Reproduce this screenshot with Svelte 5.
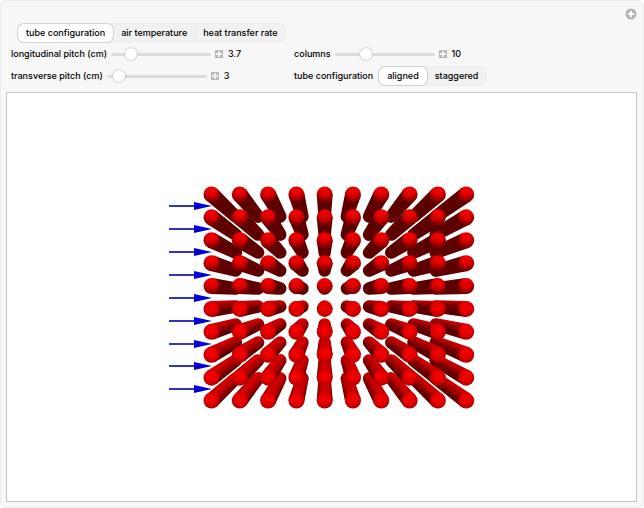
<script lang="ts">
	interface Point {
		x: number;
		y: number;
	}

	interface Tube {
		front: Point;
		back: Point;
		body: string;
		nx: number;
		ny: number;
		fill: string;
		lower: boolean;
		depth: number;
	}

	let view = $state('tube configuration');
	let layout = $state('aligned');
	let longitudinal = $state(3.7);
	let transverse = $state(3);
	let columns = $state(10);

	const views = ['tube configuration', 'air temperature', 'heat transfer rate'];
	const layouts = ['aligned', 'staggered'];

	const rows = 10;
	const eye: Point = { x: 324.5, y: 297.5 };
	const shrink = 0.785;
	const radius = 8;

	function makeTubes(cols: number, sl: number, st: number, staggered: boolean): Tube[] {
		const list: Tube[] = [];
		const stepX = 28.3 * (sl / 3.7);
		const stepY = 22.9 * (st / 3);
		for (let c = 0; c < cols; c++) {
			for (let r = 0; r < rows; r++) {
				const shift = staggered && c % 2 ? stepY / 2 : 0;
				const front = { x: 211.5 + c * stepX, y: eye.y + (r - 4.5) * stepY + shift };
				const dx = front.x - eye.x;
				const dy = front.y - eye.y;
				const back = { x: eye.x + dx * shrink, y: eye.y + dy * shrink };
				const len = Math.hypot(dx, dy) || 1;
				// unit normal across the tube, always pointing down
				let nx = -dy / len;
				let ny = dx / len;
				if (ny < 0 || (ny === 0 && nx < 0)) {
					nx = -nx;
					ny = -ny;
				}
				const rb = radius * shrink;
				const body = [
					`M${front.x + nx * radius} ${front.y + ny * radius}`,
					`L${back.x + nx * rb} ${back.y + ny * rb}`,
					`A${rb} ${rb} 0 1 ${dx < 0 ? 0 : 1} ${back.x - nx * rb} ${back.y - ny * rb}`,
					`L${front.x - nx * radius} ${front.y - ny * radius}Z`
				].join('');
				list.push({
					front,
					back,
					body,
					nx,
					ny,
					fill: `tube-${c}-${r}`,
					lower: dy > 0,
					depth: len
				});
			}
		}
		return list.sort((a, b) => b.depth - a.depth);
	}

	// diffuse light from above, so only tubes below the eye show a lit side
	function shade(t: Tube, k: number) {
		const dx = t.front.x - eye.x;
		const dy = t.front.y - eye.y;
		const side = Math.sqrt(1 - k * k);
		const x = t.nx * k - (dx / t.depth) * side;
		const y = t.ny * k - (dy / t.depth) * side;
		const light = Math.max(0, -y * 0.85 + x * 0.1);
		return `rgb(${Math.round(92 + 140 * Math.min(1, t.lower ? light : 0))}, 0, 0)`;
	}

	let tubes = $derived(makeTubes(columns, longitudinal, transverse, layout === 'staggered'));
	const arrows = [206, 229, 252, 275, 298, 321, 344, 366, 389];
</script>

<main class="panel">
	<header>
		<button class="more" aria-label="more options">
			<svg viewBox="0 0 12 12" width="12" height="12">
				<circle cx="6" cy="6" r="5.5" fill="#b5b5b5" />
				<path d="M6 3v6M3 6h6" stroke="#fff" stroke-width="2" />
			</svg>
		</button>
	</header>

	<div class="segments tabs">
		{#each views as name}
			<button class:active={view === name} onclick={() => (view = name)}>{name}</button>
		{/each}
	</div>

	<div class="controls">
		<div class="control">
			<label for="longitudinal">longitudinal pitch (cm)</label>
			<input id="longitudinal" type="range" min="3" max="7.5" step="0.1" bind:value={longitudinal} />
			{@render plus('longitudinal pitch')}
			<output for="longitudinal">{longitudinal}</output>
		</div>
		<div class="control">
			<label for="columns">columns</label>
			<input id="columns" type="range" min="5" max="22" bind:value={columns} />
			{@render plus('columns')}
			<output for="columns">{columns}</output>
		</div>
		<div class="control">
			<label for="transverse">transverse pitch (cm)</label>
			<input id="transverse" type="range" min="2.8" max="5.5" step="0.1" bind:value={transverse} />
			{@render plus('transverse pitch')}
			<output for="transverse">{transverse}</output>
		</div>
		<div class="control">
			<span>tube configuration</span>
			<div class="segments layouts">
				{#each layouts as name}
					<button class:active={layout === name} onclick={() => (layout = name)}>{name}</button>
				{/each}
			</div>
		</div>
	</div>

	<div class="plot">
		<svg viewBox="7 93 629 408" role="img" aria-label="tube bank with air flow">
			<defs>
				<radialGradient id="cap-upper" cx="0.5" cy="0.22" r="0.8">
					<stop offset="0" stop-color="#f60000" />
					<stop offset="0.4" stop-color="#e00000" />
					<stop offset="1" stop-color="#6c0000" />
				</radialGradient>
				<radialGradient id="cap-lower" cx="0.5" cy="0.4" r="0.65">
					<stop offset="0" stop-color="#fa0000" />
					<stop offset="0.55" stop-color="#e00000" />
					<stop offset="1" stop-color="#960000" />
				</radialGradient>
				{#each tubes as t (t.fill)}
					<linearGradient
						id={t.fill}
						gradientUnits="userSpaceOnUse"
						x1={t.front.x - t.nx * radius}
						y1={t.front.y - t.ny * radius}
						x2={t.front.x + t.nx * radius}
						y2={t.front.y + t.ny * radius}
					>
						{#each [-1, -0.6, -0.2, 0.2, 0.6, 1] as k}
							<stop offset={(k + 1) / 2} stop-color={shade(t, k)} />
						{/each}
					</linearGradient>
				{/each}
				<linearGradient id="head" x1="0" y1="0" x2="0" y2="1">
					<stop offset="0" stop-color="#0000ff" />
					<stop offset="1" stop-color="#0000b0" />
				</linearGradient>
			</defs>
			{#each tubes as t (t.fill)}
				<path d={t.body} fill="url(#{t.fill})" />
				<circle
					cx={t.front.x}
					cy={t.front.y}
					r={radius}
					fill={t.lower ? 'url(#cap-lower)' : 'url(#cap-upper)'}
				/>
			{/each}
			{#each arrows as y}
				<path d="M169 {y}H196" stroke="#0000b4" stroke-width="1.6" />
				<path d="M194 {y - 4}L212 {y}L194 {y + 4}Z" fill="url(#head)" />
			{/each}
		</svg>
	</div>
</main>

{#snippet plus(name: string)}
	<button class="plus" aria-label="show {name} controls">
		<svg viewBox="0 0 8 8" width="8" height="8">
			<rect width="8" height="8" fill="#b8b8b8" />
			<path d="M4 1v6M1 4h6" stroke="#fff" stroke-width="1.4" />
		</svg>
	</button>
{/snippet}

<style>
	:global(body) {
		margin: 0;
		background: #fff;
	}

	.panel {
		box-sizing: border-box;
		padding: 7px 6px 5px 5px;
		border: 1px solid #ececec;
		border-radius: 6px;
		background: #f7f7f7;
		color: #000;
		font: 500 9px/12px Inter, 'Liberation Sans', sans-serif;
	}

	button {
		padding: 0;
		border: 0;
		background: none;
		color: inherit;
		font: inherit;
		cursor: pointer;
	}

	svg {
		display: block;
	}

	header {
		display: flex;
		justify-content: flex-end;
		height: 16px;
	}

	.more {
		height: 12px;
	}

	.segments {
		display: flex;
		width: fit-content;
		border-radius: 7px;
		background: #f1f1f1;
		box-shadow: 0 0 0 1px #ededed;
	}

	.segments button {
		height: 18px;
		padding: 0 8px;
		border-radius: 6px;
	}

	.segments .active {
		background: #fff;
		box-shadow: 0 0 0 1px #d2d2d2;
	}

	.tabs {
		margin-left: 12px;
	}

	.tabs button:not(.active) + button:not(.active)::before {
		content: '';
		margin-right: 7px;
		margin-left: -8px;
		border-left: 1px solid #e2e2e2;
	}

	.layouts {
		margin-left: 2px;
	}

	.controls {
		display: grid;
		grid-template-columns: 283px 1fr;
		grid-auto-rows: 22px;
		margin-left: 5px;
		padding-top: 1px;
		padding-bottom: 5px;
	}

	.control {
		display: flex;
		align-items: center;
		gap: 4px;
	}

	output {
		margin-left: 1px;
	}

	input {
		appearance: none;
		width: 100px;
		height: 14px;
		margin: 0;
		background: none;
	}

	input::-webkit-slider-runnable-track {
		height: 3px;
		border-radius: 2px;
		background: #dcdcdc;
	}

	input::-webkit-slider-thumb {
		appearance: none;
		width: 12px;
		height: 12px;
		margin-top: -5px;
		border-radius: 50%;
		background: #fff;
		box-shadow: 0 0 2px #999;
	}

	.plot {
		border: 1px solid #c6c6c6;
		background: #fff;
	}

	.plot svg {
		width: 100%;
	}
</style>
